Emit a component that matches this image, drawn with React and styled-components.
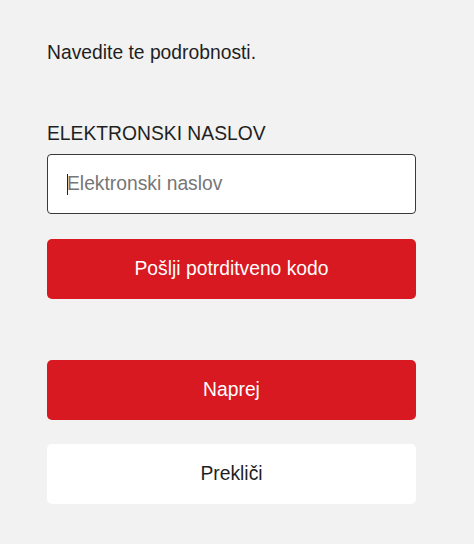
import React from "react";
import styled, { createGlobalStyle } from "styled-components";

const Global = createGlobalStyle`
  html, body { margin: 0; padding: 0; background: #f2f2f2; }
  body { font-family: Arial, "Liberation Sans", Helvetica, sans-serif; color: #222; }
  * { box-sizing: border-box; }
`;

const Page = styled.div`
  min-height: 544px;
  background: #f2f2f2;
  padding: 42px 0 0 47px;
`;

const Form = styled.form`
  width: 369px;
  display: flex;
  flex-direction: column;
`;

const Intro = styled.p`
  margin: 0;
  font-size: 19.3px;
  line-height: 22px;
  color: #1f1f1f;
`;

const Label = styled.label`
  margin-top: 59px;
  font-size: 19.3px;
  line-height: 22px;
  color: #1f1f1f;
  text-transform: uppercase;
`;

const Field = styled.div`
  position: relative;
  margin-top: 9px;
`;

const Input = styled.input`
  display: block;
  width: 100%;
  height: 60px;
  border: 1px solid #3a3a3a;
  border-radius: 4px;
  background: #fff;
  padding: 0 19px;
  font-family: inherit;
  font-size: 19.3px;
  color: #222;
  outline: none;
  &::placeholder { color: #767676; }
`;

const Caret = styled.span`
  position: absolute;
  left: 20px;
  top: 20px;
  width: 1px;
  height: 21px;
  background: #222;
`;

const Button = styled.button`
  height: 60px;
  margin-top: ${(p) => p.$gap}px;
  border: none;
  border-radius: 5px;
  font-family: inherit;
  font-size: 19.3px;
  cursor: pointer;
  background: ${(p) => (p.$variant === "primary" ? "#d81921" : "#ffffff")};
  color: ${(p) => (p.$variant === "primary" ? "#ffffff" : "#1f1f1f")};
`;

export default function App() {
  return (
    <>
      <Global />
      <Page>
        <Form onSubmit={(e) => e.preventDefault()}>
          <Intro>Navedite te podrobnosti.</Intro>
          <Label htmlFor="email">Elektronski naslov</Label>
          <Field>
            <Input id="email" type="email" placeholder="Elektronski naslov" />
            <Caret />
          </Field>
          <Button type="button" $variant="primary" $gap={25}>Pošlji potrditveno kodo</Button>
          <Button type="submit" $variant="primary" $gap={61}>Naprej</Button>
          <Button type="button" $variant="secondary" $gap={24}>Prekliči</Button>
        </Form>
      </Page>
    </>
  );
}
